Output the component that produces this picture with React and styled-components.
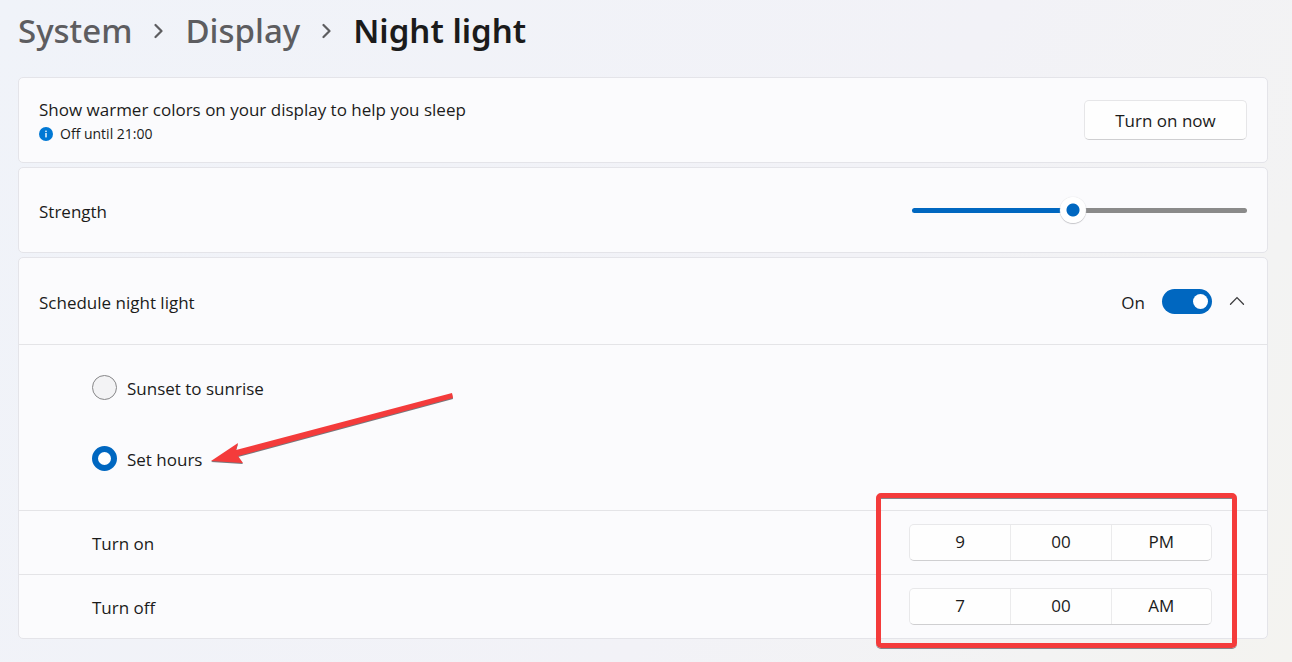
import React, { useState } from 'react';
import styled, { createGlobalStyle } from 'styled-components';

// styled-components
const GlobalStyle = createGlobalStyle`
* {
    box-sizing: border-box;
}

body {
    margin: 0;
    min-height: 100vh;
    background: linear-gradient(120deg, #f0f3f9 0%, #f2f2f7 60%, #f3f3f3 85%, #f4f3f0 100%);
    color: #1b1b1b;
    font-family: 'Open Sans', 'Noto Sans', sans-serif;
    font-size: 17px;
    line-height: 24px;
}

button, input {
    margin: 0;
    font: inherit;
    color: inherit;
}
`;

const Page = styled.main`
padding: 7px 24px 20px 18px;
`;

const Breadcrumb = styled.nav`
display: flex;
align-items: center;
gap: 22px;
height: 48px;
margin-bottom: 22px;
font-family: 'Noto Sans', 'Open Sans', sans-serif;
font-size: 33px;
line-height: 48px;
font-weight: 500;
`;

const Crumb = styled.a`
color: #5d5d60;
text-decoration: none;
`;

const PageTitle = styled.h1`
margin: 0;
font-size: inherit;
font-weight: 600;
`;

const Cards = styled.div`
display: flex;
flex-direction: column;
gap: 4px;
`;

const Card = styled.section`
background: #fbfbfd;
border: 1px solid #e4e4e9;
border-radius: 5px;
`;

const CardRow = styled.div`
display: flex;
align-items: center;
justify-content: space-between;
min-height: ${props => (props.$header ? '86px' : '84px')};
padding: 0 20px;
`;

// text sits a little below the centre line of its control
const Label = styled.label`
padding-top: 3px;
`;

const Intro = styled.div`
padding-top: 4px;
`;

const Status = styled.div`
display: flex;
align-items: center;
gap: 7px;
font-size: 14px;
`;

const Button = styled.button`
width: 163px;
height: 40px;
padding: 2px 0 0;
background: #fefefe;
border: 1px solid #e6e6e8;
border-bottom-color: #cfcfd1;
border-radius: 5px;
`;

const Slider = styled.input`
appearance: none;
width: 335px;
height: 28px;
background: transparent;

&::-webkit-slider-runnable-track {
    height: 5px;
    border-radius: 3px;
    background: linear-gradient(to right, #0067c0 ${props => props.value}%, #8a8a8a ${props => props.value}%);
}

&::-webkit-slider-thumb {
    appearance: none;
    width: 26px;
    height: 26px;
    margin-top: -11px;
    border-radius: 50%;
    background: radial-gradient(circle, #0067c0 6px, #ffffff 7px);
    box-shadow: 0 0 1px #c4c4c8, 0 1px 1px #c4c4c8;
}
`;

const SwitchGroup = styled.div`
display: flex;
align-items: center;
gap: 17px;
`;

const Switch = styled.input`
appearance: none;
display: flex;
align-items: center;
justify-content: ${props => (props.checked ? 'flex-end' : 'flex-start')};
width: 50px;
height: 25px;
padding: 0 4px;
border-radius: 13px;
background: ${props => (props.checked ? '#0067c0' : '#8a8a8a')};

&::before {
    content: '';
    width: 15px;
    height: 15px;
    border-radius: 50%;
    background: #ffffff;
}
`;

const ExpandButton = styled.button`
display: flex;
padding: 0;
margin-right: 2px;
border: 0;
background: none;
`;

const Options = styled.div`
display: flex;
flex-direction: column;
gap: 46px;
padding: 30px 73px 39px;
border-top: 1px solid #e4e4e7;
`;

const Option = styled.div`
position: relative;
display: flex;
align-items: center;
gap: 10px;
height: 25px;
`;

const Radio = styled.input`
appearance: none;
width: 25px;
height: 25px;
border: ${props => (props.checked ? '6px solid #0067c0' : '1px solid #868688')};
border-radius: 50%;
background: ${props => (props.checked ? '#ffffff' : '#f3f3f5')};
`;

const Arrow = styled.svg`
position: absolute;
left: 118px;
top: -57px;
pointer-events: none;
`;

const Hours = styled.div`
position: relative;
`;

const HoursRow = styled.div`
display: flex;
align-items: center;
justify-content: space-between;
height: 64px;
padding: 0 55px 0 73px;
border-top: 1px solid #e4e4e7;
`;

const TimePicker = styled.div`
display: grid;
grid-template-columns: repeat(3, 1fr);
width: 303px;
height: 37px;
background: #fefefe;
border: 1px solid #e8e8ea;
border-bottom-color: #cfcfd1;
border-radius: 5px;
`;

const TimePart = styled.button`
padding: 0 0 2px;
border: 0;
border-left: 1px solid #ebebec;
background: none;

&:first-child {
    border-left: 0;
}
`;

const Highlight = styled.div`
position: absolute;
top: -17px;
right: 30px;
bottom: -10px;
width: 361px;
border: 5px solid #f43b3b;
border-radius: 5px;
box-shadow: 0 1px 0 #85858a, inset 0 1px 0 #85858a;
pointer-events: none;
`;
// end styled-components

const CrumbChevron = () => (
    <svg width='9' height='16' viewBox='0 0 9 16' fill='none' stroke='#5d5d60' strokeWidth='2.2' strokeLinecap='round' strokeLinejoin='round'>
        <path d='M1.5 2 L7.5 8 L1.5 14' />
    </svg>
);

const InfoIcon = () => (
    <svg width='14' height='14' viewBox='0 0 14 14'>
        <circle cx='7' cy='7' r='7' fill='#0078d4' />
        <rect x='6.3' y='3.6' width='1.4' height='1.5' fill='#ffffff' />
        <rect x='6.3' y='6' width='1.4' height='4.4' fill='#ffffff' />
    </svg>
);

const TimeRow = ({ id, label, parts }) => (
    <HoursRow>
        <Label as='span' id={id}>{label}</Label>
        <TimePicker role='group' aria-labelledby={id}>
            {parts.map((part, index) => (
                <TimePart key={index} type='button'>{part}</TimePart>
            ))}
        </TimePicker>
    </HoursRow>
);

const App = () => {

    const [strength, setStrength] = useState(48);
    const [scheduled, setScheduled] = useState(true);
    const [expanded, setExpanded] = useState(true);
    const [mode, setMode] = useState('hours');

    const handleMode = event => {
        setMode(event.target.value);
    };

    return (
        <>
            <GlobalStyle />
            <Page>
                <Breadcrumb>
                    <Crumb href='#system'>System</Crumb>
                    <CrumbChevron />
                    <Crumb href='#display'>Display</Crumb>
                    <CrumbChevron />
                    <PageTitle>Night light</PageTitle>
                </Breadcrumb>
                <Cards>
                    <Card>
                        <CardRow>
                            <Intro>
                                <div>Show warmer colors on your display to help you sleep</div>
                                <Status><InfoIcon />Off until 21:00</Status>
                            </Intro>
                            <Button type='button'>Turn on now</Button>
                        </CardRow>
                    </Card>
                    <Card>
                        <CardRow>
                            <Label htmlFor='strength'>Strength</Label>
                            <Slider
                                id='strength'
                                type='range'
                                value={strength}
                                onChange={event => setStrength(event.target.value)}
                            />
                        </CardRow>
                    </Card>
                    <Card>
                        <CardRow $header>
                            <Label htmlFor='schedule'>Schedule night light</Label>
                            <SwitchGroup>
                                <Label as='span'>{scheduled ? 'On' : 'Off'}</Label>
                                <Switch
                                    id='schedule'
                                    type='checkbox'
                                    role='switch'
                                    checked={scheduled}
                                    onChange={() => setScheduled(!scheduled)}
                                />
                                <ExpandButton type='button' aria-label='Schedule options' aria-expanded={expanded} onClick={() => setExpanded(!expanded)}>
                                    <svg width='16' height='10' viewBox='0 0 16 10' fill='none' stroke='#3c3c3e' strokeWidth='1.3' strokeLinecap='round'>
                                        <path d='M1.5 8.2 L8 1.6 L14.5 8.2' />
                                    </svg>
                                </ExpandButton>
                            </SwitchGroup>
                        </CardRow>
                        {expanded && (
                            <>
                                <Options>
                                    <Option>
                                        <Radio id='sunset' type='radio' name='mode' value='sunset' checked={mode === 'sunset'} onChange={handleMode} />
                                        <Label htmlFor='sunset'>Sunset to sunrise</Label>
                                    </Option>
                                    <Option>
                                        <Radio id='hours' type='radio' name='mode' value='hours' checked={mode === 'hours'} onChange={handleMode} />
                                        <Label htmlFor='hours'>Set hours</Label>
                                        <Arrow width='248' height='80' viewBox='0 0 248 80'>
                                            <path d='M1 72 L28 54 L26 61 L242 4 L243 9 L28 67 L33 74 Z' fill='#77777c' transform='translate(0 1)' />
                                            <path d='M1 72 L28 54 L26 61 L242 4 L243 9 L28 67 L33 74 Z' fill='#f43b3b' />
                                        </Arrow>
                                    </Option>
                                </Options>
                                <Hours>
                                    <TimeRow id='turn-on' label='Turn on' parts={['9', '00', 'PM']} />
                                    <TimeRow id='turn-off' label='Turn off' parts={['7', '00', 'AM']} />
                                    <Highlight />
                                </Hours>
                            </>
                        )}
                    </Card>
                </Cards>
            </Page>
        </>
    );
};

export default App;
